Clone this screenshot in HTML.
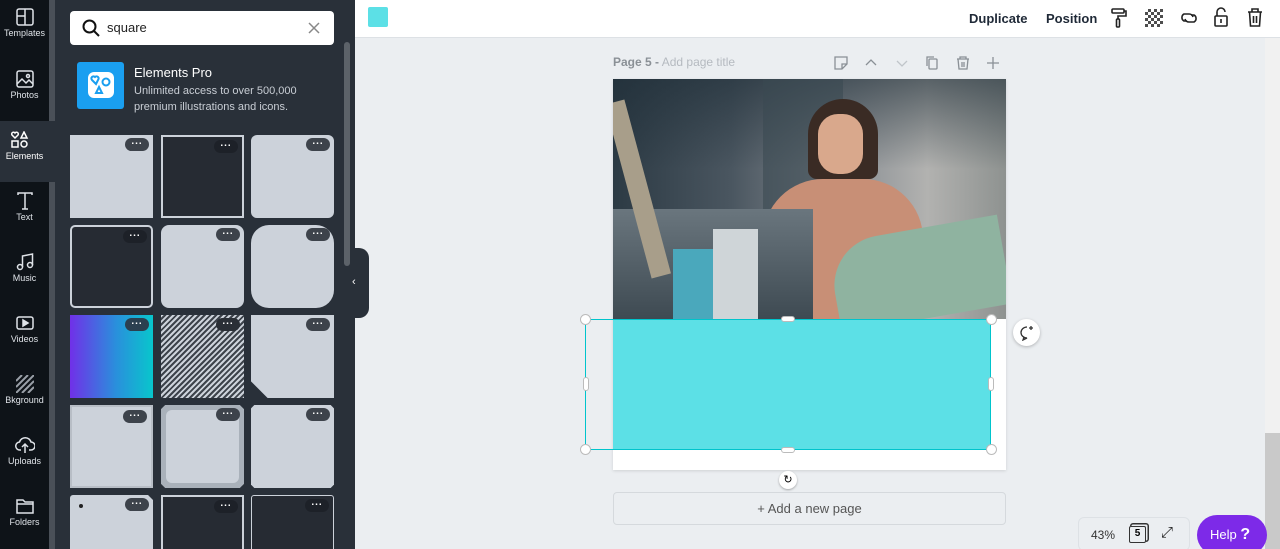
<!DOCTYPE html>
<html><head><meta charset="utf-8"><style>
*{margin:0;padding:0;box-sizing:border-box}
html,body{width:1280px;height:549px;overflow:hidden}
body{font-family:"Liberation Sans",sans-serif;background:#ebeef1;position:relative}
#w{position:absolute;left:0;top:0;width:1280px;height:549px;overflow:hidden}
.a{position:absolute}
.rail{left:0;top:0;width:49px;height:549px;background:#0e1318}
.ri{position:absolute;left:0;width:49px;height:61px;color:#dfe3e8;font-size:9px;text-align:center}
.ri svg{display:block;margin:10px auto 2px}
.panel{left:55px;top:0;width:300px;height:549px;background:#293039}
.t{position:absolute;width:83px;height:83px;background:#ccd2da;border-radius:3px}
.dots{position:absolute;right:4px;top:3px;width:24px;height:13px;border-radius:7px;background:#3d434b;color:#fff;font-size:10px;line-height:8px;text-align:center;letter-spacing:1px;font-weight:bold}
.dk{background:#262b33;border:2px solid #ccd2da}
</style></head><body><div id="w">
<div class="a rail">
 <div class="a" style="left:49px;top:0;width:6px;height:549px;background:#4a5058"></div>
 <div class="ri" style="top:-2px"><svg width="18" height="18" viewBox="0 0 18 18" fill="none" stroke="#dfe3e8" stroke-width="1.5"><rect x="1" y="1" width="16" height="16" rx="2"/><path d="M9 1v16M1 8h8"/></svg>Templates</div>
 <div class="ri" style="top:60px"><svg width="18" height="18" viewBox="0 0 18 18" fill="none" stroke="#dfe3e8" stroke-width="1.5"><rect x="1" y="1" width="16" height="16" rx="2"/><path d="M1 14l5-5 4 4 3-3 4 4"/><circle cx="12" cy="6" r="1.5"/></svg>Photos</div>
 <div class="ri" style="top:121px;background:#293039;width:55px"><svg width="18" height="18" viewBox="0 0 18 18" fill="none" stroke="#fff" stroke-width="1.5" style="margin-left:11px"><path d="M4 7L1 4a1.5 1.5 0 013-2 1.5 1.5 0 013 2z"/><path d="M13 1l3 6h-6z"/><rect x="1" y="10" width="6" height="6"/><circle cx="13" cy="13" r="3"/></svg><span style="margin-left:-6px;color:#fff">Elements</span></div>
 <div class="ri" style="top:182px"><svg width="18" height="18" viewBox="0 0 18 18" fill="none" stroke="#dfe3e8" stroke-width="1.5"><path d="M2 3V1h14v2M9 1v16M6 17h6"/></svg>Text</div>
 <div class="ri" style="top:243px"><svg width="18" height="18" viewBox="0 0 18 18" fill="none" stroke="#dfe3e8" stroke-width="1.5"><circle cx="4" cy="14" r="2.5"/><circle cx="14" cy="12" r="2.5"/><path d="M6.5 14V3l10-2v11"/></svg>Music</div>
 <div class="ri" style="top:304px"><svg width="18" height="18" viewBox="0 0 18 18" fill="none" stroke="#dfe3e8" stroke-width="1.5"><rect x="1" y="3" width="16" height="12" rx="2"/><path d="M7 6v6l5-3z" fill="#dfe3e8"/></svg>Videos</div>
 <div class="ri" style="top:365px"><svg width="18" height="18" viewBox="0 0 18 18" stroke="#9aa0a8" stroke-width="2"><path d="M0 6L6 0M0 12L12 0M0 18L18 0M6 18L18 6M12 18l6-6"/></svg>Bkground</div>
 <div class="ri" style="top:426px"><svg width="20" height="18" viewBox="0 0 20 18" fill="none" stroke="#dfe3e8" stroke-width="1.5"><path d="M6 14H5a4 4 0 01-.5-8A6 6 0 0116 6a4 4 0 010 8h-2"/><path d="M10 17V8M7 11l3-3 3 3"/></svg>Uploads</div>
 <div class="ri" style="top:487px"><svg width="18" height="18" viewBox="0 0 18 18" fill="none" stroke="#dfe3e8" stroke-width="1.5"><path d="M1 3h6l2 2h8v11H1z"/><path d="M1 7h16"/></svg>Folders</div>
</div>
<div class="a panel">
 <div class="a" style="left:289px;top:42px;width:6px;height:224px;background:#5c6269;border-radius:3px"></div>
</div>
<div class="a" style="left:70px;top:11px;width:264px;height:34px;background:#fff;border-radius:4px">
 <svg class="a" style="left:12px;top:8px" width="18" height="18" viewBox="0 0 18 18" fill="none" stroke="#111" stroke-width="2"><circle cx="7.5" cy="7.5" r="6"/><path d="M12 12l5 5"/></svg>
 <span class="a" style="left:37px;top:9px;font-size:13px;color:#222">square</span>
 <svg class="a" style="left:238px;top:11px" width="12" height="12" viewBox="0 0 12 12" stroke="#888" stroke-width="1.5"><path d="M1 1l10 10M11 1L1 11"/></svg>
</div>
<div class="a" style="left:77px;top:62px;width:47px;height:47px;background:#1a9ff0;border-radius:3px">
 <div class="a" style="left:11px;top:10px;width:26px;height:26px;background:#fff;border-radius:6px"></div>
 <svg class="a" style="left:11px;top:10px" width="26" height="26" viewBox="0 0 26 26" fill="none" stroke="#1a9ff0" stroke-width="2"><path d="M8 12L4 8a2 2 0 013-3 2 2 0 013 3z"/><circle cx="18" cy="10" r="3.5"/><path d="M11 15l3 6H8z"/></svg>
</div>
<div class="a" style="left:134px;top:65px;color:#fff;font-size:13px">Elements Pro</div>
<div class="a" style="left:134px;top:83px;color:#c9ced5;font-size:11px;line-height:16px">Unlimited access to over 500,000<br>premium illustrations and icons.</div>

<div class="t" style="left:70px;top:135px;border-radius:0"><div class="dots">...</div></div>
<div class="t dk" style="left:161px;top:135px;border-radius:0"><div class="dots" style="background:#1d2128">...</div></div>
<div class="t" style="left:251px;top:135px;border-radius:6px"><div class="dots">...</div></div>
<div class="t dk" style="left:70px;top:225px;border-radius:5px"><div class="dots" style="background:#1d2128">...</div></div>
<div class="t" style="left:161px;top:225px;border-radius:8px"><div class="dots">...</div></div>
<div class="t" style="left:251px;top:225px;border-radius:18px"><div class="dots">...</div></div>
<div class="t" style="left:70px;top:315px;border-radius:0;background:linear-gradient(90deg,#7030e8,#2a8fdc 55%,#08c6cc)"><div class="dots" style="background:#2b4050">...</div></div>
<div class="t" style="left:161px;top:315px;border-radius:0;background:repeating-linear-gradient(135deg,#ccd2da 0 2px,#3d434b 2px 4px)"><div class="dots" style="background:#2a2f36">...</div></div>
<div class="t" style="left:251px;top:315px;border-radius:0;clip-path:polygon(0 0,100% 0,100% 100%,20% 100%,0 80%)"><div class="dots">...</div></div>
<div class="t" style="left:70px;top:405px;border-radius:0;border:2px solid #b8bec6"><div class="dots">...</div></div>
<div class="t" style="left:161px;top:405px;background:#a9b1ba;clip-path:polygon(5% 0,95% 0,100% 5%,100% 95%,95% 100%,5% 100%,0 95%,0 5%)"><div class="a" style="left:5px;top:5px;right:5px;bottom:5px;background:#ccd2da;border-radius:6px"></div><div class="dots">...</div></div>
<div class="t" style="left:251px;top:405px;clip-path:polygon(4% 0,96% 0,100% 4%,100% 96%,96% 100%,4% 100%,0 96%,0 4%)"><div class="dots">...</div></div>
<div class="t" style="left:70px;top:495px;clip-path:polygon(0 0,94% 0,100% 6%,100% 100%,0 100%)"><div class="a" style="left:9px;top:9px;width:4px;height:4px;border-radius:2px;background:#222"></div><div class="dots">...</div></div>
<div class="t dk" style="left:161px;top:495px;border-radius:0"><div class="dots" style="background:#1d2128">...</div></div>
<div class="t dk" style="left:251px;top:495px;border:1px solid #ccd2da;border-radius:3px"><div class="dots" style="background:#1d2128">...</div></div>

<div class="a" style="left:350px;top:248px;width:19px;height:70px;background:#293039;border-radius:0 10px 10px 0"></div>
<div class="a" style="left:352px;top:276px;color:#fff;font-size:11px">‹</div>

<div class="a" style="left:355px;top:0;width:925px;height:38px;background:#fff;border-bottom:1px solid #dde1e5"></div>
<div class="a" style="left:368px;top:7px;width:20px;height:20px;background:#5ce0e6;border-radius:2px"></div>
<div class="a" style="left:969px;top:11px;font-size:13px;font-weight:bold;color:#1f2937">Duplicate</div>
<div class="a" style="left:1046px;top:11px;font-size:13px;font-weight:bold;color:#1f2937">Position</div>
<svg class="a" style="left:1110px;top:8px" width="18" height="20" viewBox="0 0 18 20" fill="none" stroke="#222" stroke-width="1.6"><rect x="2" y="1" width="12" height="4" rx="1"/><path d="M14 3h2v5H8v3"/><rect x="6.5" y="11" width="3" height="8" rx="1"/></svg>
<div class="a" style="left:1145px;top:9px;width:18px;height:18px;background:repeating-conic-gradient(#222 0 25%,#fff 0 50%) 0 0/6px 6px;opacity:.8"></div>
<svg class="a" style="left:1179px;top:10px" width="20" height="16" viewBox="0 0 20 16" fill="none" stroke="#222" stroke-width="1.6"><path d="M8 11H5a4 4 0 010-7h5a4 4 0 014 3"/><path d="M12 5h3a4 4 0 010 7h-5a4 4 0 01-4-3"/></svg>
<svg class="a" style="left:1213px;top:7px" width="16" height="20" viewBox="0 0 16 20" fill="none" stroke="#222" stroke-width="1.6"><rect x="2" y="9" width="12" height="10" rx="1"/><path d="M4 9V5a4 4 0 018 0"/><path d="M8 12v4"/></svg>
<svg class="a" style="left:1247px;top:8px" width="16" height="19" viewBox="0 0 16 19" fill="none" stroke="#222" stroke-width="1.6"><path d="M1 4h14M5 4V1h6v3M2.5 4l1 14h9l1-14M6.5 8v7M9.5 8v7"/></svg>

<div class="a" style="left:613px;top:55px;font-size:12px;color:#8a9096"><b>Page 5 -</b> <span style="color:#b5bac0">Add page title</span></div>
<svg class="a" style="left:833px;top:55px" width="170" height="16" viewBox="0 0 170 16" fill="none" stroke="#8a9096" stroke-width="1.3"><path d="M2 2h12v7l-5 5H2z M9 14v-5h5"/><path d="M33 10l5-5 5 5"/><path d="M64 6l5 5 5-5" stroke="#c0c5ca"/><rect x="96" y="4" width="8" height="10" rx="1"/><path d="M94 11V2h7"/><path d="M124 4h12M127 4V2h6v2M125 4l1 10h8l1-10M129 7v5M131 7v5"/><path d="M160 2v12M154 8h12"/></svg>

<div class="a" style="left:613px;top:79px;width:393px;height:391px;background:#fff;box-shadow:0 1px 3px rgba(0,0,0,.12)"></div>
<div class="a" style="left:613px;top:79px;width:393px;height:240px;overflow:hidden;background:linear-gradient(90deg,#2c3a44 0%,#4a5660 30%,#8a8f94 60%,#b2b2b0 80%,#8e9290 100%)">
 <div class="a" style="left:0;top:0;width:393px;height:90px;background:linear-gradient(180deg,rgba(30,45,55,.6),rgba(0,0,0,0))"></div>
 <div class="a" style="left:150px;top:0;width:80px;height:140px;background:#3b4a52;opacity:.6"></div>
 <div class="a" style="left:195px;top:20px;width:70px;height:80px;background:#3a2b24;border-radius:40px 40px 10px 10px"></div>
 <div class="a" style="left:205px;top:35px;width:45px;height:60px;background:#d9a88c;border-radius:20px"></div>
 <div class="a" style="left:150px;top:100px;width:160px;height:140px;background:#c88f76;border-radius:60px 60px 0 0"></div>
 <div class="a" style="left:220px;top:150px;width:173px;height:90px;background:#8fb3a0;border-radius:50px 0 0 0;transform:rotate(-10deg)"></div>
 <div class="a" style="left:0;top:130px;width:200px;height:110px;background:linear-gradient(180deg,#6a767e,#3e4a52)"></div>
 <div class="a" style="left:15px;top:20px;width:20px;height:180px;background:#a89e8a;transform:rotate(-15deg)"></div>
 <div class="a" style="left:60px;top:170px;width:50px;height:70px;background:#4aa8bc"></div>
 <div class="a" style="left:100px;top:150px;width:45px;height:90px;background:#cfd5d8"></div>
</div>
<div class="a" style="left:613px;top:319px;width:378px;height:131px;background:#5ce0e6"></div>
<div class="a" style="left:585px;top:319px;width:406px;height:131px;border:1.5px solid #00c4cc"></div>
<div class="a" style="left:580px;top:314px;width:11px;height:11px;border-radius:6px;background:#fff;border:1px solid #bbb"></div>
<div class="a" style="left:986px;top:314px;width:11px;height:11px;border-radius:6px;background:#fff;border:1px solid #bbb"></div>
<div class="a" style="left:580px;top:444px;width:11px;height:11px;border-radius:6px;background:#fff;border:1px solid #bbb"></div>
<div class="a" style="left:986px;top:444px;width:11px;height:11px;border-radius:6px;background:#fff;border:1px solid #bbb"></div>
<div class="a" style="left:781px;top:316px;width:14px;height:6px;border-radius:3px;background:#fff;border:1px solid #bbb"></div>
<div class="a" style="left:781px;top:447px;width:14px;height:6px;border-radius:3px;background:#fff;border:1px solid #bbb"></div>
<div class="a" style="left:583px;top:377px;width:6px;height:14px;border-radius:3px;background:#fff;border:1px solid #bbb"></div>
<div class="a" style="left:988px;top:377px;width:6px;height:14px;border-radius:3px;background:#fff;border:1px solid #bbb"></div>
<div class="a" style="left:779px;top:471px;width:18px;height:18px;border-radius:9px;background:#fff;box-shadow:0 1px 2px rgba(0,0,0,.3);font-size:11px;text-align:center;line-height:18px">↻</div>
<div class="a" style="left:1013px;top:319px;width:27px;height:27px;border-radius:14px;background:#fff;box-shadow:0 1px 3px rgba(0,0,0,.25)"></div>
<svg class="a" style="left:1019px;top:325px" width="16" height="16" viewBox="0 0 16 16" fill="none" stroke="#333" stroke-width="1.3"><path d="M8 2a6 5.5 0 100 11l-4 2 1-3"/><path d="M12 1v4M10 3h4"/></svg>
<div class="a" style="left:613px;top:492px;width:393px;height:33px;border:1px solid #d5d9dd;border-radius:4px;text-align:center;line-height:31px;font-size:13px;color:#555">+ Add a new page</div>
<div class="a" style="left:1265px;top:38px;width:15px;height:511px;background:#f1f1f1"></div>
<div class="a" style="left:1265px;top:433px;width:15px;height:116px;background:#c9c9c9"></div>
<div class="a" style="left:1078px;top:517px;width:112px;height:34px;background:#ebeef1;border:1px solid #dde1e5;border-radius:6px"></div>
<div class="a" style="left:1091px;top:528px;font-size:12px;color:#333">43%</div>
<div class="a" style="left:1129px;top:526px;width:17px;height:17px;border:1.5px solid #333;border-radius:2px;font-size:10px;font-weight:bold;text-align:center;line-height:14px;box-shadow:2px -2px 0 -0.5px #ebeef1,2px -2px 0 1px #333">5</div>
<div class="a" style="left:1161px;top:524px;font-size:15px;color:#222">⤢</div>
<div class="a" style="left:1197px;top:515px;width:70px;height:40px;background:#7d2ae8;border-radius:20px;color:#fff;font-size:13px;padding:11px 0 0 13px">Help <b style="font-size:16px">?</b></div>
</div></body></html>
